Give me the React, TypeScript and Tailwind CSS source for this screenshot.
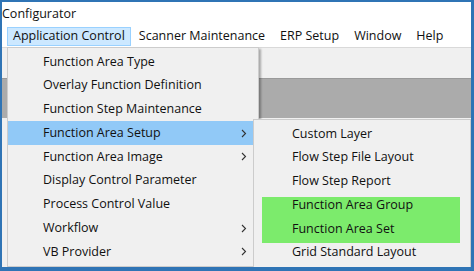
import React from 'react';

const font = "font-['Segoe_UI','Open_Sans',sans-serif]";

const menuBar = ['Application Control', 'Scanner Maintenance', 'ERP Setup', 'Window', 'Help'];

const mainItems = [
  { label: 'Function Area Type' },
  { label: 'Overlay Function Definition' },
  { label: 'Function Step Maintenance' },
  { label: 'Function Area Setup', sub: true, active: true },
  { label: 'Function Area Image', sub: true },
  { label: 'Display Control Parameter' },
  { label: 'Process Control Value' },
  { label: 'Workflow', sub: true },
  { label: 'VB Provider', sub: true },
];

const subItems = [
  'Custom Layer',
  'Flow Step File Layout',
  'Flow Step Report',
  'Function Area Group',
  'Function Area Set',
  'Grid Standard Layout',
];

const Chevron = () => (
  <svg width="6" height="9" viewBox="0 0 6 9" className="shrink-0">
    <path d="M1 1l3.5 3.5L1 8" fill="none" stroke="#333" strokeWidth="1.1" />
  </svg>
);

export default function App() {
  return (
    <div className={`w-[474px] h-[271px] bg-[#2f74b5] pt-[2px] pl-[2px] pr-[3px] pb-[4px] ${font} text-[12.5px] text-[#111]`}>
      <div className="relative h-full bg-white flex flex-col overflow-hidden">
        {/* title */}
        <div className="h-[24px] flex items-center pl-0 leading-none">Configurator</div>

        {/* menu bar */}
        <div className="h-[21px] flex items-center pl-[5px]">
          {menuBar.map((m, i) => (
            <div
              key={m}
              className={
                i === 0
                  ? 'h-[19px] flex items-center px-[5px] bg-[#cce8ff] border border-[#99d1ff]'
                  : 'h-[19px] flex items-center px-[7px] ml-[1px]'
              }
            >
              {m}
            </div>
          ))}
        </div>

        {/* toolbar band */}
        <div className="h-[32px] bg-[#f0f0f0] border-t border-[#d9d9d9] border-b border-b-[#9a9a9a]" />
        <div className="h-[39px] bg-[#ababab]" />
        <div className="flex-1 bg-[#f0f0f0]" />

        {/* dropdown */}
        <div className="absolute left-[5px] top-[45px] w-[252px] py-[2px] bg-[#f0f0f0] border border-[#cccccc] shadow-[2px_2px_2px_rgba(0,0,0,0.3)]">
          {mainItems.map((it) => (
            <div
              key={it.label}
              className={`h-[23.75px] flex items-center pl-[35px] pr-[11px] ${it.active ? 'bg-[#91c9f7]' : ''}`}
            >
              <span className="flex-1">{it.label}</span>
              {it.sub && <Chevron />}
            </div>
          ))}
        </div>

        {/* submenu */}
        <div className="absolute left-[251px] top-[117px] w-[218px] py-[2px] bg-[#f0f0f0] border border-[#cccccc] shadow-[2px_2px_2px_rgba(0,0,0,0.3)]">
          <div className="absolute left-[8px] top-[77px] w-[198px] h-[46px] bg-[#7ceb6c]" />
          {subItems.map((s) => (
            <div key={s} className="relative h-[23.75px] flex items-center pl-[38px]">
              {s}
            </div>
          ))}
        </div>
      </div>
    </div>
  );
}
